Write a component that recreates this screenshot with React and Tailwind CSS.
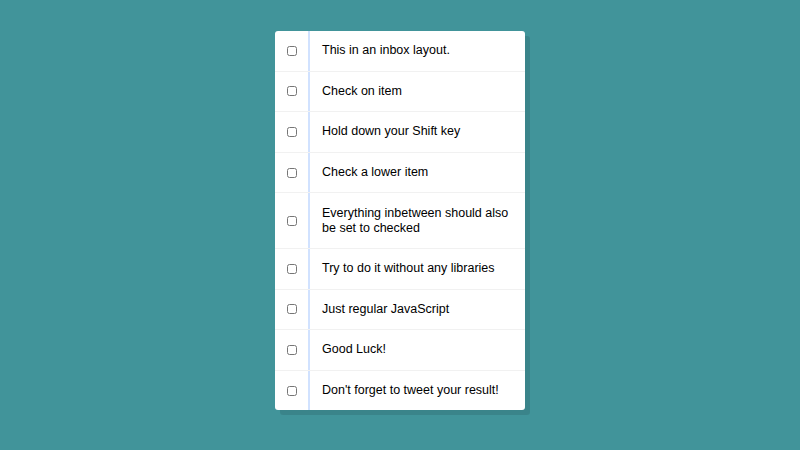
import React from 'react'

const ITEMS = [
  'This in an inbox layout.',
  'Check on item',
  'Hold down your Shift key',
  'Check a lower item',
  'Everything inbetween should also be set to checked',
  'Try to do it without any libraries',
  'Just regular JavaScript',
  'Good Luck!',
  "Don't forget to tweet your result!",
]

export default function App() {
  return (
    <div className="w-[800px] h-[450px] bg-[#41949a] pt-[31px]" style={{ fontFamily: '"Liberation Sans", Arial, sans-serif' }}>
      <div className="w-[250px] mx-auto bg-white rounded-[3px] shadow-[5px_5px_0_rgba(0,0,0,0.1)] overflow-hidden">
        {ITEMS.map((t, i) => (
          <div key={i} className={`flex items-center ${i < ITEMS.length - 1 ? 'border-b border-[#f1f1f1]' : ''}`}>
            <div className="w-[33px] shrink-0 flex justify-center self-stretch items-center">
              <input type="checkbox" className="w-[10px] h-[10px] m-0" />
            </div>
            <p className="flex-1 m-0 py-[12.3px] pl-[12px] pr-[10px] text-[12.5px] leading-[15px] text-black border-l-2 border-[#d1e2ff]">
              {t}
            </p>
          </div>
        ))}
      </div>
    </div>
  )
}
